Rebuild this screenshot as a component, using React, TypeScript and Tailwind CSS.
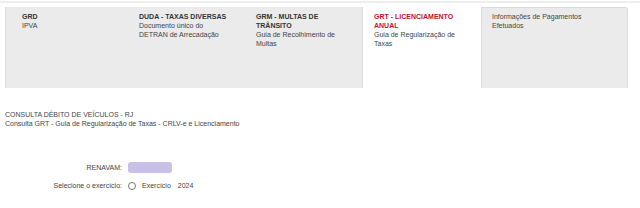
export default function App() {
  const font = { fontFamily: "'Liberation Sans', Arial, sans-serif" };
  return (
    <div className="w-[640px] h-[208px] bg-white text-[7px] leading-[9px] text-[#444]" style={font}>
      <div className="h-[6px] border-t-2 border-[#eeeeee] mt-px" />
      <div className="ml-[5px] flex h-[81px]">
        <div className="flex w-[358px] bg-[#ebebeb] border-l border-r border-[#dcdcdc] pl-[16px] pt-[5px]">
          <div className="w-[117px]">
            <div className="font-bold text-[#333]">GRD</div>
            <div>IPVA</div>
          </div>
          <div className="w-[117px]">
            <div className="font-bold text-[#333]">DUDA - TAXAS DIVERSAS</div>
            <div>Documento único do<br />DETRAN de Arrecadação</div>
          </div>
          <div className="flex-1">
            <div className="font-bold text-[#333]">GRM - MULTAS DE<br />TRÂNSITO</div>
            <div>Guia de Recolhimento de<br />Multas</div>
          </div>
        </div>
        <div className="w-[118px] bg-white pl-[11px] pt-[5px]">
          <div className="font-bold text-[#c4102e]">GRT - LICENCIAMENTO<br />ANUAL</div>
          <div>Guia de Regularização de<br />Taxas</div>
        </div>
        <div className="w-[147px] bg-[#ebebeb] border border-b-0 border-[#dcdcdc] rounded-tr-[3px] pl-[10px] pt-[4px]">
          <div>Informações de Pagamentos<br />Efetuados</div>
        </div>
      </div>
      <div className="pl-[5px] pt-[22px]">
        <div>CONSULTA DÉBITO DE VEÍCULOS - RJ</div>
        <div>Consulta GRT - Guia de Regularização de Taxas - CRLV-e e Licenciamento</div>
      </div>
      <div className="pt-[34px] flex flex-col gap-[8px]">
        <div className="flex items-center">
          <div className="w-[122px] text-right">RENAVAM:</div>
          <div className="ml-[6px] w-[44px] h-[11px] rounded-[3px] bg-[#c8c0e6]" />
        </div>
        <div className="flex items-center">
          <div className="w-[122px] text-right">Selecione o exercício:</div>
          <div className="ml-[6px] w-[8px] h-[8px] rounded-full border border-[#777] bg-white" />
          <div className="ml-[6px]">Exercício</div>
          <div className="ml-[7px]">2024</div>
        </div>
      </div>
    </div>
  );
}
